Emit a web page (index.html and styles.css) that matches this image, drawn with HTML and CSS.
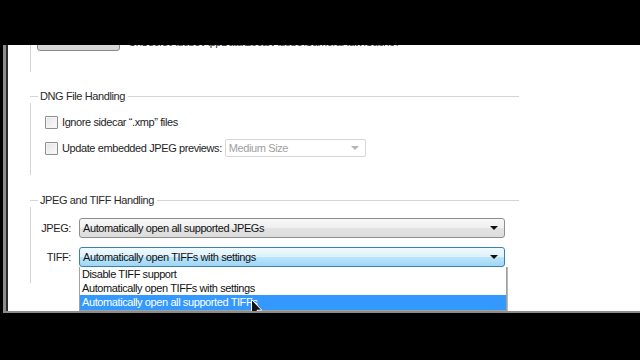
FILE: index.html
```html
<!DOCTYPE html>
<html lang="en">
<head>
    <meta charset="UTF-8">
    <title>Camera Raw Preferences</title>
    <link rel="stylesheet" href="styles.css">
</head>
<body>

<div class="screen">
    <div class="dialog">
        <div class="cache-group">
            <div class="cache-row">
                <button class="btn">Select Location...</button>
                <span class="path">C:\Users\Adobe\AppData\Local\Adobe\CameraRaw\Cache\</span>
            </div>
        </div>

        <section class="group group-dng">
            <div class="group-title"><span>DNG File Handling</span></div>
            <div class="group-body">
                <div class="check-row">
                    <span class="checkbox"></span>
                    <span>Ignore sidecar “.xmp” files</span>
                </div>
                <div class="check-row">
                    <span class="checkbox"></span>
                    <span>Update embedded JPEG previews:</span>
                    <div class="combo combo-disabled">
                        <span>Medium Size</span>
                        <span class="arrow"></span>
                    </div>
                </div>
            </div>
        </section>

        <section class="group group-jpeg">
            <div class="group-title"><span>JPEG and TIFF Handling</span></div>
            <div class="group-body">
                <div class="field-row">
                    <label>JPEG:</label>
                    <div class="combo combo-select">
                        <span>Automatically open all supported JPEGs</span>
                        <span class="arrow"></span>
                    </div>
                </div>
                <div class="field-row field-open">
                    <label>TIFF:</label>
                    <div class="combo combo-select combo-active">
                        <span>Automatically open TIFFs with settings</span>
                        <span class="arrow"></span>
                    </div>
                    <!-- lista aberta do combo TIFF -->
                    <ul class="dropdown">
                        <li>Disable TIFF support</li>
                        <li>Automatically open TIFFs with settings</li>
                        <li class="selected">Automatically open all supported TIFFs</li>
                    </ul>
                </div>
            </div>
        </section>

        <svg class="cursor" width="12" height="19" viewBox="0 0 12 19">
            <path d="M0.5 0.5 L0.5 15.5 L4 12 L6.5 17.5 L8.5 16.6 L6 11.2 L10.8 11.2 Z" fill="#111" stroke="#fff" stroke-width="1"/>
        </svg>
    </div>
</div>

</body>
</html>
```

FILE: styles.css
```css
body {
    margin: 0;
    background: #000;
    font-family: "Liberation Sans", Arial, sans-serif;
    font-size: 11px;
    letter-spacing: -0.4px;
    color: #1e1e1e;
}
.screen {
    width: 640px;
    height: 360px;
    padding-top: 45px;
    box-sizing: border-box;
    overflow: hidden;
}
.dialog {
    position: relative;
    height: 268px;
    margin-left: 3px;
    box-sizing: border-box;
    background: #fff;
    border-left: 3px solid #8c8c8c;
    border-bottom: 2px solid #8c8c8c;
    box-shadow: inset 2px 0 0 #2c2c2c;
    overflow: hidden;
}
.cache-group {
    display: flow-root;
    margin-left: 24px;
    height: 27px;
    border-left: 1px solid #d4d4d4;
}
.cache-row {
    display: flex;
    align-items: center;
    gap: 8px;
    margin-top: -16px;
    padding-left: 6px;
    white-space: nowrap;
}
.btn {
    width: 83px;
    height: 22px;
    padding: 0;
    font: inherit;
    color: #1e1e1e;
    border: 1px solid #8a8a8a;
    border-radius: 3px;
    background: linear-gradient(#f4f4f4, #ebebeb 50%, #dedede 50%, #d6d6d6);
}
.path {
    align-self: flex-end;
    margin-bottom: 2px;
    line-height: 14px;
    color: #333;
}
.group {
    width: 489px;
    margin-left: 24px;
}
.group-dng {
    margin-top: 17px;
}
.group-jpeg {
    margin-top: 18px;
}
.group-title {
    display: flex;
    align-items: center;
    height: 14px;
    color: #2a2a2a;
}
.group-title::before,
.group-title::after {
    content: "";
    border-top: 1px solid #d4d4d4;
}
.group-title::before {
    width: 8px;
}
.group-title::after {
    flex: 1;
}
.group-title span {
    padding: 0 3px 0 2px;
}
.group-body {
    display: flex;
    flex-direction: column;
    border-left: 1px solid #d4d4d4;
}
.group-dng .group-body {
    gap: 8px;
    padding: 10px 0 18px 14px;
}
.group-jpeg .group-body {
    gap: 9px;
    padding: 11px 0 16px 0;
}
.check-row {
    display: flex;
    align-items: center;
    height: 18px;
    gap: 4px;
}
.checkbox {
    width: 11px;
    height: 11px;
    border: 1px solid #8f8f8f;
    border-radius: 1px;
    background: linear-gradient(135deg, #e4e4e4, #fbfbfb);
    box-shadow: inset 0 0 0 1px #f4f4f4;
}
.combo {
    display: flex;
    align-items: center;
    justify-content: space-between;
    box-sizing: border-box;
    padding: 0 6px 0 3px;
}
.combo-disabled {
    width: 141px;
    height: 18px;
    margin-left: -1px;
    border: 1px solid #d6d6d6;
    border-radius: 2px;
    color: #a0a0a0;
}
.combo-disabled .arrow {
    border-top-color: #b4b4b4;
}
.arrow {
    width: 0;
    height: 0;
    border-left: 4px solid transparent;
    border-right: 4px solid transparent;
    border-top: 4px solid #111;
}
.field-row {
    position: relative;
    display: flex;
    align-items: center;
    gap: 8px;
}
.field-row label {
    width: 40px;
    text-align: right;
}
.combo-select {
    width: 426px;
    height: 20px;
    border: 1px solid #8e8e8e;
    border-radius: 3px;
    background: linear-gradient(#f8f8f8, #efefef 50%, #e3e3e3 50%, #dcdcdc);
    color: #111;
}
.combo-active {
    border-color: #3c7fb1;
    background: linear-gradient(#f0faff, #dcf2fd 50%, #bde5fb 50%, #9dd6f6);
}
.dropdown {
    position: absolute;
    top: 100%;
    left: 48px;
    width: 426px;
    margin: 0;
    padding: 0;
    list-style: none;
    background: #fff;
    border: 1px solid #a0a0a0;
    border-top: none;
    box-shadow: 1px 0 0 #b8b8b8;
    color: #111;
}
.dropdown li {
    height: 14px;
    line-height: 14px;
    padding-left: 2px;
}
.dropdown .selected {
    height: 15px;
    background: #3399ff;
    color: #fff;
}
.cursor {
    position: absolute;
    left: 245px;
    top: 254px;
}
```
